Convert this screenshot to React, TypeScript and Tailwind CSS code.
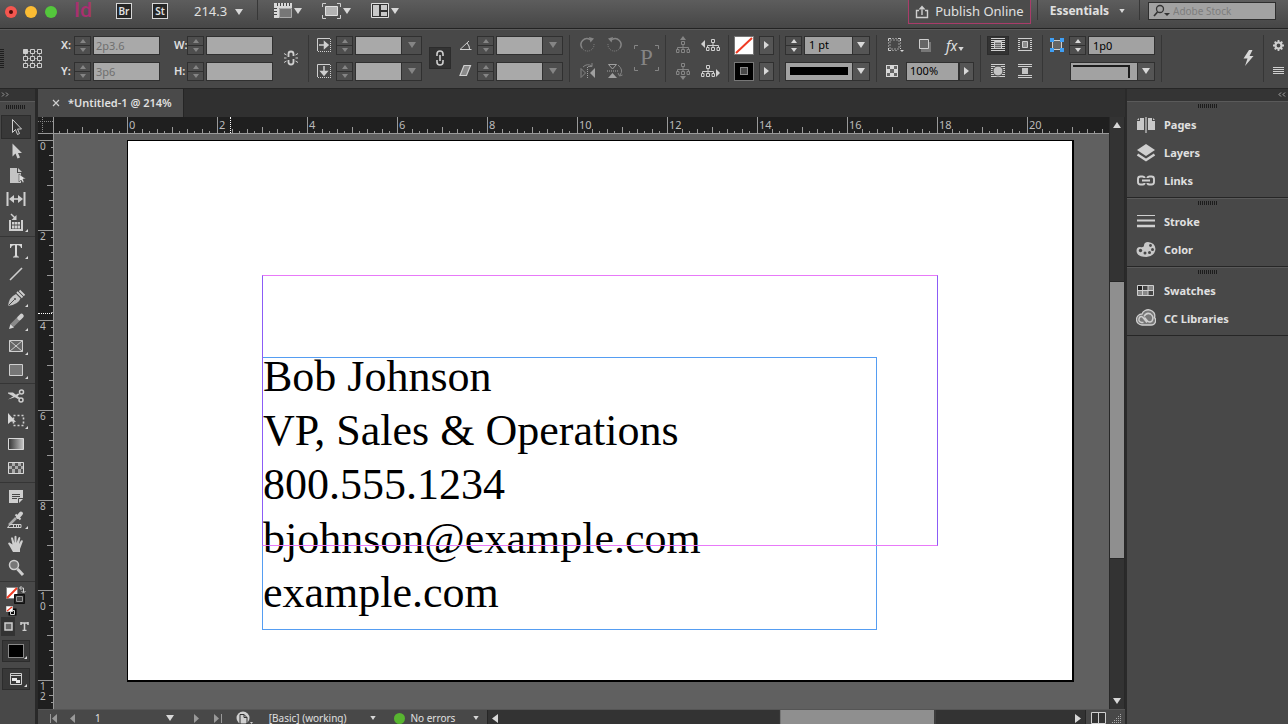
import { useState, type ReactNode } from "react";
import clsx from "clsx";

const Icon = ({ w = 20, h = 20, children }: { w?: number; h?: number; children: ReactNode }) => (
	<svg
		width={w}
		height={h}
		viewBox={`0 0 ${w} ${h}`}
		fill="none"
		stroke="#cfcfcf"
		className="block shrink-0"
		aria-hidden="true"
	>
		{children}
	</svg>
);

const Caret = ({ dim = false, small = false }: { dim?: boolean; small?: boolean }) => (
	<svg
		width={small ? 6 : 8}
		height={small ? 4 : 6}
		viewBox="0 0 8 6"
		fill={dim ? "#858585" : "#d8d8d8"}
		className="block shrink-0"
		aria-hidden="true"
	>
		<path d="M0 0h8L4 6z" />
	</svg>
);

const Separator = () => <div className="h-[47px] w-px shrink-0 bg-[#363636]" />;

const Stepper = ({ name, dim = false }: { name: string; dim?: boolean }) => (
	<div className="flex h-[19px] w-[17px] shrink-0 flex-col border border-[#303030]">
		<button
			type="button"
			aria-label={`Increase ${name}`}
			className="flex flex-1 items-center justify-center border-b border-[#303030] bg-[#4e4e4e]"
		>
			<svg width="6" height="4" viewBox="0 0 6 4" fill={dim ? "#858585" : "#d8d8d8"}>
				<path d="M0 4h6L3 0z" />
			</svg>
		</button>
		<button
			type="button"
			aria-label={`Decrease ${name}`}
			className="flex flex-1 items-center justify-center bg-[#4e4e4e]"
		>
			<svg width="6" height="4" viewBox="0 0 6 4" fill={dim ? "#858585" : "#d8d8d8"}>
				<path d="M0 0h6L3 4z" />
			</svg>
		</button>
	</div>
);

const LabelledField = ({ id, value }: { id: string; value: string }) => (
	<div className="flex h-[19px] items-center">
		<label htmlFor={id} className="w-[13px] shrink-0 text-[11px] font-semibold">
			{id}:
		</label>
		<Stepper name={id} dim />
		<input
			id={id}
			defaultValue={value}
			className="ml-0.5 h-[19px] w-[67px] border border-[#303030] bg-[#a9a9a9] px-0.5 text-[11px] text-[#6f6f6f]"
		/>
	</div>
);

const EmptyCombo = ({ name }: { name: string }) => (
	<div className="flex items-center gap-0.5">
		<Stepper name={name} dim />
		<div className="flex h-[19px] w-[67px] border border-[#303030]">
			<input aria-label={name} className="w-[46px] border-r border-[#303030] bg-[#a9a9a9]" />
			<button
				type="button"
				aria-label={`${name} presets`}
				className="flex flex-1 items-center justify-center bg-[#4e4e4e]"
			>
				<Caret dim />
			</button>
		</div>
	</div>
);

const ArrowButton = ({ name }: { name: string }) => (
	<button
		type="button"
		aria-label={name}
		className="flex h-[19px] w-[15px] shrink-0 items-center justify-center border border-[#303030] bg-[#555]"
	>
		<svg width="5" height="8" viewBox="0 0 5 8" fill="#d8d8d8">
			<path d="M0 0v8l5-4z" />
		</svg>
	</button>
);

const DropButton = ({ name }: { name: string }) => (
	<button
		type="button"
		aria-label={name}
		className="flex w-[17px] shrink-0 items-center justify-center border-l border-[#303030] bg-[#555]"
	>
		<Caret />
	</button>
);

const Rows = ({ children, className }: { children: ReactNode; className?: string }) => (
	<div className={clsx("flex shrink-0 flex-col gap-[7px]", className)}>{children}</div>
);

const IconButton = ({ name, children, className }: { name: string; children: ReactNode; className?: string }) => (
	<button
		type="button"
		aria-label={name}
		className={clsx("flex h-[19px] shrink-0 items-center justify-center", className)}
	>
		{children}
	</button>
);

const Tree = ({ dim = false, arrow }: { dim?: boolean; arrow: "up" | "down" | "left" | "right" }) => {
	const color = dim ? "#858585" : "#cfcfcf";
	const arrows = {
		up: "M6 4h6L9 0z",
		down: "M6 14h6l-3 4z",
		left: "M4 4v8L0 8z",
		right: "M15 7v8l4-4z",
	};
	const shift = { up: 5, down: 1, left: 3, right: 3 }[arrow];
	const side = arrow === "left" ? 3 : arrow === "right" ? -2 : 0;
	return (
		<Icon w={19} h={18}>
			<g transform={`translate(${side} ${shift})`} stroke={color}>
				<path d="M7.500 .5h3v3h-3zM2.500 8.500h2.500v3H2.500zM7.500 8.500h3v3h-3zM13 8.500h2.500v3H13zM9 4v4M3.500 8V6.500h11V8" />
			</g>
			<path d={arrows[arrow]} fill={color} stroke="none" />
		</Icon>
	);
};

const Wrap = ({ kind }: { kind: "none" | "box" | "shape" | "jump" }) => (
	<Icon w={14} h={14}>
		<path
			d={kind === "jump" ? "M0 .5h14M0 2.500h14M0 11.500h14M0 13.500h14" : "M0 .5h14M0 2.500h14M0 4.500h14M0 6.500h14M0 8.500h14M0 10.500h14M0 12.500h14"}
		/>
		{kind === "none" && <path d="M3.500 3.500h7v7h-7z" fill="#8a8a8a" fillOpacity=".6" stroke="#cfcfcf" />}
		{kind === "box" && (
			<>
				<path d="M2 2h10v10H2z" fill="#484848" stroke="none" />
				<path d="M4.500 3.500h5v6h-5z" fill="#8a8a8a" />
			</>
		)}
		{kind === "shape" && (
			<circle cx="7" cy="7" r="5" fill="#c4c4c4" stroke="#484848" />
		)}
		{kind === "jump" && <path d="M4 4h6v6H4z" fill="#c4c4c4" stroke="none" />}
	</Icon>
);

const TitleBar = () => (
	<header className="flex h-[29px] shrink-0 items-start overflow-hidden border-b border-[#232323] bg-linear-to-b from-[#5d5d5d] to-[#464646]">
		<div className="flex gap-2 pt-1.5 pl-[5px]">
			<button type="button" aria-label="Close window" className="flex size-3 items-center justify-center rounded-full bg-[#f4564f]">
				<span className="size-1 rounded-full bg-[#4d0b08]" />
			</button>
			<button type="button" aria-label="Minimize window" className="size-3 rounded-full bg-[#fbbc33]" />
			<button type="button" aria-label="Zoom window" className="size-3 rounded-full bg-[#54c73c]" />
		</div>
		<span className="ml-[17px] w-[42px] font-['Roboto',sans-serif] text-[21px] leading-5 font-medium text-[#a9306f]">Id</span>
		<button type="button" className="mt-[3px] size-4 border border-[#d8d8d8] bg-[#262626] text-[10px] leading-[14px] font-semibold">
			Br
		</button>
		<button type="button" className="mt-[3px] ml-5 size-4 border border-[#d8d8d8] bg-[#262626] text-[10px] leading-[14px] font-semibold">
			St
		</button>
		<button type="button" className="ml-[26px] flex h-6 items-center gap-2 text-[13px]">
			214.3 <Caret />
		</button>
		<div className="ml-3.5 h-5 w-px bg-[#373737]" />
		<button type="button" aria-label="View options" className="mt-[3px] ml-4 flex items-center gap-0.5">
			<Icon w={18} h={16}>
				<path d="M0 0h18v5H5v10H0z" fill="#d8d8d8" stroke="none" />
				<path d="M5.500 5.500h12v9h-12z" fill="#777" stroke="#aaa" />
				<path d="M3.500 0v3M6.500 0v3M9.500 0v3M12.500 0v3M15.500 0v3M0 5.500h3M0 8.500h3M0 11.500h3" stroke="#444" />
			</Icon>
			<Caret />
		</button>
		<button type="button" aria-label="Screen mode" className="mt-[3px] ml-5 flex items-center gap-0.5">
			<Icon w={19} h={16}>
				<path d="M.5 4V.5H4M15 .5h3.500V4M18.500 12v3.500H15M4 15.500H.5V12" />
				<path d="M3.500 3.500h12v9h-12z" fill="#b4b4b4" stroke="#e0e0e0" />
			</Icon>
			<Caret />
		</button>
		<button type="button" aria-label="Arrange documents" className="mt-[3px] ml-5 flex items-center gap-0.5">
			<Icon w={18} h={16}>
				<path d="M.5 .5h17v14H.5z" fill="#333" stroke="#e0e0e0" />
				<path d="M2 2h6v11H2zM10 2h6v5h-6zM10 9h6v4h-6z" fill="#c8c8c8" stroke="none" />
			</Icon>
			<Caret />
		</button>
		<button
			type="button"
			className="ml-auto flex h-6 items-center gap-1.5 border border-t-0 border-[#a93c6a] bg-[#4b4b4b] px-1.5 text-[13px] whitespace-nowrap"
		>
			<Icon w={14} h={14}>
				<path d="M4 5.500H1.500v7h11v-7H10M7 10V2M4.500 4.500 7 1.500l2.500 3" strokeWidth="1.400" />
			</Icon>
			Publish Online
		</button>
		<div className="ml-1.5 h-5 w-px bg-[#373737]" />
		<button type="button" className="ml-3 flex h-[22px] items-center gap-2.5 text-[12px] font-bold">
			Essentials <Caret small />
		</button>
		<div className="mr-2 ml-3.5 h-5 w-px bg-[#373737]" />
		<div className="mt-0.5 mr-3 flex h-[18px] w-[128px] items-center border border-[#2e2e2e] bg-[#a2a2a2] pl-1">
			<Icon w={18} h={14}>
				<circle cx="7" cy="5" r="3.500" stroke="#333" strokeWidth="1.300" />
				<path d="M4.500 8 1 12" stroke="#333" strokeWidth="1.600" />
				<path d="M11 9h6l-3 3z" fill="#333" stroke="none" />
			</Icon>
			<input
				type="search"
				aria-label="Search Adobe Stock"
				placeholder="Adobe Stock"
				className="ml-0.5 w-[96px] text-[10px] placeholder:text-[#7d7d7d]"
			/>
		</div>
	</header>
);

const ControlBar = () => (
	<section
		aria-label="Control"
		className="flex h-[60px] shrink-0 items-center border-t border-b border-t-[#5a5a5a] border-b-[#262626] bg-[#484848] pb-0.5"
	>
		<svg width="4" height="19" className="block shrink-0" stroke="#1e1e1e">
			<path d="M0 .5h4M0 2.500h4M0 4.500h4M0 6.500h4M0 8.500h4M0 10.500h4M0 12.500h4M0 14.500h4M0 16.500h4M0 18.500h4" />
		</svg>
		<button type="button" aria-label="Reference point" className="ml-[19px]">
			<Icon w={19} h={19}>
				<path d="M5 2.500h2M12 2.500h2M5 16.500h2M12 16.500h2M2.500 5v2M2.500 12v2M16.500 5v2M16.500 12v2M9.500 5v2M9.500 12v2M5 9.500h2M12 9.500h2" stroke="#999" />
				<path d="M.5 .5h4v4h-4z" fill="#cfcfcf" />
				<path d="M7.500 .5h4v4h-4zM14.500 .5h4v4h-4zM.5 7.500h4v4h-4zM7.500 7.500h4v4h-4zM14.500 7.500h4v4h-4zM.5 14.500h4v4h-4zM7.500 14.500h4v4h-4zM14.500 14.500h4v4h-4z" />
			</Icon>
		</button>
		<Rows className="ml-[19px]">
			<LabelledField id="X" value="2p3.6" />
			<LabelledField id="Y" value="3p6" />
		</Rows>
		<Rows className="ml-3.5">
			<LabelledField id="W" value="" />
			<LabelledField id="H" value="" />
		</Rows>
		<button type="button" aria-label="Constrain width and height" className="mr-2.5 ml-[11px]">
			<Icon w={14} h={16}>
				<path d="M4.500 6V4a2.500 2.500 0 0 1 5 0v2M4.500 10v2a2.500 2.500 0 0 0 5 0v-2M4.500 6v1M9.500 9v1" strokeWidth="1.800" />
				<path d="M0 8h2.500M11.500 8H14M0 3.500l2.500 1.500M14 3.500 11.500 5M0 12.500 2.500 11M14 12.500 11.500 11" />
			</Icon>
		</button>
		<Separator />
		<Rows className="ml-2">
			<div className="flex items-center gap-[5px]">
				<Icon w={14} h={14}>
					<path d="M.5 13V.5H13" strokeWidth="1" />
					<path d="M13.500 1v13M1 13.500h12" strokeDasharray="1 1" />
					<path d="M2 7h8M7.500 4 11 7l-3.500 3z" fill="#d8d8d8" strokeWidth="1.500" />
				</Icon>
				<EmptyCombo name="Scale X" />
			</div>
			<div className="flex items-center gap-[5px]">
				<Icon w={14} h={14}>
					<path d="M.5 13V.5H13" />
					<path d="M13.500 1v13M1 13.500h12" strokeDasharray="1 1" />
					<path d="M7 2v8M4 7.500 7 11l3-3.500z" fill="#d8d8d8" strokeWidth="1.500" />
				</Icon>
				<EmptyCombo name="Scale Y" />
			</div>
		</Rows>
		<button
			type="button"
			aria-label="Constrain scale"
			className="mx-[7px] flex h-[22px] w-[22px] shrink-0 items-center justify-center border border-[#2c2c2c] bg-[#333]"
		>
			<Icon w={8} h={16}>
				<path d="M1 6V4a3 3 0 0 1 6 0v2M1 10v2a3 3 0 0 0 6 0v-2M4 5v6" strokeWidth="1.600" />
			</Icon>
		</button>
		<Rows className="ml-px">
			<div className="flex items-center gap-[5px]">
				<Icon w={13} h={14}>
					<path d="M1 11.500h11.500M1 11.500 10 3M8 5q3 3 2.500 6.500" fill="#8a8a8a" />
				</Icon>
				<EmptyCombo name="Rotation" />
			</div>
			<div className="flex items-center gap-[5px]">
				<Icon w={13} h={14}>
					<path d="M5 1.500h6.500l-4 10H1z" fill="#8a8a8a" strokeWidth="1.200" />
				</Icon>
				<EmptyCombo name="Shear" />
			</div>
		</Rows>
		<div className="ml-1.5">
			<Separator />
		</div>
		<Rows className="ml-2">
			<div className="flex gap-2">
				<IconButton name="Rotate 90° clockwise">
					<Icon w={19} h={18}>
						<path d="M4 12A6 6 0 0 1 12 3.500" stroke="#858585" strokeWidth="1.500" />
						<path d="M11 1l5 1.500-3.500 4z" fill="#858585" stroke="none" />
						<path d="M16 8a6.500 6.500 0 0 1-12 4" stroke="#858585" strokeDasharray="1 1" />
					</Icon>
				</IconButton>
				<IconButton name="Rotate 90° counter-clockwise">
					<Icon w={19} h={18}>
						<path d="M15 12A6 6 0 0 0 7 3.500" stroke="#858585" strokeWidth="1.500" />
						<path d="M8 1 3 2.500l3.500 4z" fill="#858585" stroke="none" />
						<path d="M3 8a6.500 6.500 0 0 0 12 4" stroke="#858585" strokeDasharray="1 1" />
					</Icon>
				</IconButton>
			</div>
			<div className="flex gap-2">
				<IconButton name="Flip horizontal">
					<Icon w={19} h={18}>
						<path d="M3 6.500v9L7.500 11z" stroke="#858585" />
						<path d="M17 6v10l-5-5z" fill="#a0a0a0" stroke="none" />
						<path d="M9.500 5v12" stroke="#a0a0a0" strokeDasharray="1 1" />
						<path d="M5 5q4-4 9-1M14 1v3.500h-4" stroke="#858585" />
					</Icon>
				</IconButton>
				<IconButton name="Flip vertical">
					<Icon w={19} h={18}>
						<path d="M3.500 2.500h8L7.500 7z" stroke="#a0a0a0" />
						<path d="M3 16h9l-4.500-5z" fill="#a0a0a0" stroke="none" />
						<path d="M2 9h11" stroke="#a0a0a0" strokeDasharray="1 1" />
						<path d="M13 3q6 5 2 10M13 11l1.500 3 3-1" stroke="#858585" />
					</Icon>
				</IconButton>
			</div>
		</Rows>
		<div className="relative ml-2.5 flex h-[26px] w-[25px] shrink-0 items-center justify-center font-['Liberation_Serif',serif] text-[23px] text-[#858585]">
			<svg width="25" height="26" className="absolute inset-0" fill="none" stroke="#858585">
				<path d="M.5 4V.5H4M21 .5h3.500V4M24.500 22v3.500H21M4 25.500H.5V22" />
			</svg>
			P
		</div>
		<div className="mr-2 ml-1.5">
			<Separator />
		</div>
		<Rows>
			<div className="flex gap-2">
				<IconButton name="Select container"><Tree dim arrow="up" /></IconButton>
				<IconButton name="Select previous object"><Tree arrow="left" /></IconButton>
			</div>
			<div className="flex gap-2">
				<IconButton name="Select content"><Tree dim arrow="down" /></IconButton>
				<IconButton name="Select next object"><Tree arrow="right" /></IconButton>
			</div>
		</Rows>
		<div className="mr-[5px] ml-2">
			<Separator />
		</div>
		<Rows>
			<div className="flex gap-[5px]">
				<IconButton name="Fill" className="w-5 border border-[#777] bg-white">
					<Icon w={18} h={17}>
						<path d="M1 16 17 1" stroke="#ef3b24" strokeWidth="2" />
					</Icon>
				</IconButton>
				<ArrowButton name="Fill options" />
			</div>
			<div className="flex gap-[5px]">
				<IconButton name="Stroke" className="w-5 border border-[#777] bg-black">
					<span className="size-2 border border-[#8a8a8a] bg-[#484848]" />
				</IconButton>
				<ArrowButton name="Stroke options" />
			</div>
		</Rows>
		<div className="mr-[5px] ml-[5px]">
			<Separator />
		</div>
		<Rows className="w-[85px]">
			<div className="flex gap-0.5">
				<Stepper name="stroke weight" />
				<div className="flex h-[19px] w-[66px] border border-[#303030]">
					<input aria-label="Stroke weight" defaultValue="1 pt" className="min-w-0 flex-1 bg-[#a2a2a2] px-1 text-[11px] text-black" />
					<DropButton name="Stroke weight presets" />
				</div>
			</div>
			<div className="flex h-[19px] border border-[#303030] bg-[#a2a2a2]">
				<div className="flex flex-1 items-center px-1">
					<div className="h-2 flex-1 bg-black" />
				</div>
				<DropButton name="Stroke type" />
			</div>
		</Rows>
		<div className="mr-1.5 ml-1.5">
			<Separator />
		</div>
		<Rows>
			<div className="flex gap-3 pl-1">
				<IconButton name="Corner options">
					<Icon w={17} h={16}>
						<path d="M3 3h9v9H3z" stroke="#9a9a9a" strokeDasharray="2 1" />
						<path d="M1.500 4V1.500H4M5.500 1.500h1M8.500 1.500h1M11 1.500h2.500V4M1.500 5.500v1M1.500 8.500v1M13.500 5.500v1M13.500 8.500v1M5.500 13.500h1M8.500 13.500h1M4 13.500H1.500V11M13.500 11v1" />
						<path d="M13 13h4l-2 2z" fill="#d8d8d8" stroke="none" />
					</Icon>
				</IconButton>
				<IconButton name="Drop shadow">
					<Icon w={18} h={16}>
						<path d="M5 5h10v10H5z" fill="#777" stroke="none" />
						<path d="M3.500 2.500h9v9h-9z" fill="#666" />
					</Icon>
				</IconButton>
				<IconButton name="Effects" className="gap-px text-[14px] italic">
					fx
					<span className="pt-2"><Caret small /></span>
				</IconButton>
			</div>
			<div className="flex items-center gap-2 pl-[3px]">
				<Icon w={12} h={12}>
					<path d="M0 0h12v12H0z" fill="#d8d8d8" stroke="none" />
					<path d="M1 1h3v3H1zM8 1h3v3H8zM4 4h4v4H4zM1 8h3v3H1zM8 8h3v3H8z" fill="#666" stroke="none" />
				</Icon>
				<div className="flex h-[19px]">
					<input aria-label="Opacity" defaultValue="100%" className="w-[53px] border border-[#303030] bg-[#a2a2a2] px-[3px] text-[11px] text-black" />
					<ArrowButton name="Opacity slider" />
				</div>
			</div>
		</Rows>
		<div className="mr-1.5 ml-1.5">
			<Separator />
		</div>
		<Rows>
			<div className="flex gap-[5px]">
				<IconButton name="No text wrap" className="w-[22px] border border-[#2c2c2c] bg-[#333]"><Wrap kind="none" /></IconButton>
				<IconButton name="Wrap around bounding box" className="w-[22px]"><Wrap kind="box" /></IconButton>
			</div>
			<div className="flex gap-[5px]">
				<IconButton name="Wrap around object shape" className="w-[22px]"><Wrap kind="shape" /></IconButton>
				<IconButton name="Jump object" className="w-[22px]"><Wrap kind="jump" /></IconButton>
			</div>
		</Rows>
		<div className="mr-[7px] ml-1.5">
			<Separator />
		</div>
		<Rows>
			<div className="flex items-center">
				<Icon w={14} h={14}>
					<path d="M2.500 2.500h9v9h-9z" fill="#666" />
					<path d="M0 0h4v4H0zM10 0h4v4h-4zM0 10h4v4H0zM10 10h4v4h-4z" fill="#3f9ff5" stroke="none" />
				</Icon>
				<div className="ml-[5px] flex gap-0.5">
					<Stepper name="corner size" />
					<input aria-label="Corner size" defaultValue="1p0" className="h-[19px] w-[67px] border border-[#303030] bg-[#a2a2a2] px-1 text-[11px] text-black" />
				</div>
			</div>
			<div className="ml-5 flex h-[19px] border border-[#303030] bg-[#a2a2a2]">
				<svg viewBox="0 0 66 17" className="h-[17px] min-w-0 flex-1" fill="none" stroke="#1c1c1c" strokeWidth="2">
					<path d="M2 3h56v12" />
				</svg>
				<DropButton name="Corner shape" />
			</div>
		</Rows>
		<div className="ml-1.5">
			<Separator />
		</div>
		<button type="button" aria-label="Quick apply" className="mr-2 ml-auto">
			<Icon w={14} h={18}>
				<path d="M8 1 2.500 9.500H6.500L4 17l8.500-10H8.500L11.500 1z" fill="#d8d8d8" stroke="none" />
			</Icon>
		</button>
		<Separator />
		<Rows className="mr-[3px] ml-2">
			<IconButton name="Customize control panel" className="w-[13px]">
				<Icon w={11} h={11}>
					<circle cx="5.500" cy="5.500" r="3" strokeWidth="2.200" />
					<path d="M5.500 0v2M5.500 9v2M0 5.500h2M9 5.500h2M1.700 1.700 3 3M8 8l1.300 1.300M9.300 1.700 8 3M3 8 1.700 9.300" strokeWidth="1.800" />
				</Icon>
			</IconButton>
			<IconButton name="Panel menu" className="w-[13px]">
				<Icon w={11} h={8}>
					<path d="M0 .5h11M0 2.500h11M0 4.500h11M0 6.500h11" />
				</Icon>
			</IconButton>
		</Rows>
	</section>
);

type Tool = { name: string; art: ReactNode; flyout?: boolean };

const toolGroups: Tool[][] = [
	[
		{
			name: "Selection",
			art: <path d="M6.500 2.500v13l3-3 2 5 2-1-2-4.500h4z" fill="#333" />,
		},
		{
			name: "Direct Selection",
			art: <path d="M6.500 2.500v13l3-3 2 5 2.500-1-2-4.500h4z" fill="#cfcfcf" stroke="none" />,
		},
		{
			name: "Page",
			art: (
				<>
					<path d="M4 3h7v5h4v10H4zM12 3l4 4h-4z" fill="#c4c4c4" stroke="none" />
					<path d="M13 9v8l2-2 2 3 1-1-1-3h3z" fill="#e0e0e0" stroke="#484848" strokeWidth=".6" />
				</>
			),
		},
		{
			name: "Gap",
			art: (
				<>
					<path d="M1.500 3v14M18.500 3v14" strokeWidth="2" />
					<path d="M5 10h10" strokeWidth="1.600" />
					<path d="M8 6v8l-5-4zM12 6v8l5-4z" fill="#cfcfcf" stroke="none" />
				</>
			),
		},
		{
			name: "Content Collector",
			flyout: true,
			art: (
				<>
					<path d="M4 7v10h12V7" strokeWidth="2" />
					<path d="M6 9h2.500v2.500H6zM9 9h2.500v2.500H9zM12 9h2v2.500h-2zM6 12.500h2.500v3H6zM9 12.500h2.500v3H9zM12 12.500h2v3h-2z" fill="#cfcfcf" stroke="none" />
					<path d="M5 1l4 4" strokeWidth="1.500" />
					<path d="M10.500 2v5h-5z" fill="#cfcfcf" stroke="none" />
				</>
			),
		},
	],
	[
		{
			name: "Type",
			flyout: true,
			art: <path d="M4 4h12v4h-1q-.5-2.800-3-2.800h-1V15q0 1.500 2 1.700v.8H7v-.8q2-.2 2-1.700V5.200H8Q5.500 5.200 5 8H4z" fill="#d8d8d8" stroke="none" />,
		},
		{ name: "Line", art: <path d="M4 16 16 4" strokeWidth="1.600" /> },
		{
			name: "Pen",
			flyout: true,
			art: (
				<>
					<path d="M2 18q1-9 8-12l4.500 4.500q-2 6-12.500 7.500z" fill="#c4c4c4" stroke="none" />
					<path d="M2.500 17.500l6-6" stroke="#484848" />
					<circle cx="9" cy="11" r="1" fill="#484848" stroke="none" />
					<path d="M11 4l5.500 5.500M13.500 2.500l5 5" strokeWidth="1.800" />
				</>
			),
		},
		{
			name: "Pencil",
			flyout: true,
			art: (
				<>
					<path d="M3 17l1.500-5 3.500 3.500z" fill="#d8d8d8" stroke="none" />
					<path d="M6 13.500 13.500 6" stroke="#8a8a8a" strokeWidth="4.500" />
					<path d="M13.500 6l2-2" strokeWidth="4.500" strokeLinecap="round" />
				</>
			),
		},
		{
			name: "Rectangle Frame",
			flyout: true,
			art: <path d="M3.500 4.500h13v11h-13zM3.500 4.500l13 11M16.500 4.500l-13 11" fill="#666" />,
		},
		{ name: "Rectangle", flyout: true, art: <path d="M3.500 4.500h13v11h-13z" fill="#777" /> },
	],
	[
		{
			name: "Scissors",
			art: (
				<>
					<circle cx="15.500" cy="6" r="2" strokeWidth="1.500" />
					<circle cx="15" cy="14" r="2" strokeWidth="1.500" />
					<path d="M2 6.500h5l7 5.500-2 1L2 7.500zM2 13.500l10-6 2 .5-3 2.500z" fill="#cfcfcf" stroke="none" />
				</>
			),
		},
		{
			name: "Free Transform",
			flyout: true,
			art: (
				<>
					<path d="M7.500 5.500h10v10h-10z" strokeWidth="1.600" strokeDasharray="2 2" />
					<path d="M2 3v11l3-2.500 5 .5z" fill="#d8d8d8" stroke="none" />
				</>
			),
		},
		{
			name: "Gradient Swatch",
			art: (
				<>
					<defs>
						<linearGradient id="swatch">
							<stop stopColor="#333" />
							<stop offset="1" stopColor="#c8c8c8" />
						</linearGradient>
					</defs>
					<path d="M2.500 4.500h15v11h-15z" fill="url(#swatch)" stroke="#d8d8d8" />
				</>
			),
		},
		{
			name: "Gradient Feather",
			art: (
				<>
					<path d="M2.500 4.500h15v11h-15z" fill="#aaa" stroke="#d8d8d8" />
					<path d="M3 5h3v3H3zM9 5h3v3H9zM15 5h2v3h-2zM6 8h3v3H6zM12 8h3v3h-3zM3 11h3v4H3zM9 11h3v4H9zM15 11h2v4h-2z" fill="#555" stroke="none" />
				</>
			),
		},
	],
	[
		{
			name: "Note",
			art: (
				<>
					<path d="M3 4h14v9l-4 4H3z" fill="#cfcfcf" stroke="none" />
					<path d="M6 8.500h8M6 10.500h8M6 12.500h5M12.500 17v-4.500H17" stroke="#484848" />
				</>
			),
		},
		{
			name: "Eyedropper",
			flyout: true,
			art: (
				<>
					<path d="M3 15 10 8" stroke="#aaa" strokeWidth="2.500" />
					<path d="M9.500 4.500l5 5" strokeWidth="2" />
					<path d="M12 7l3-3.500" strokeWidth="4" strokeLinecap="round" />
					<path d="M1.500 17.500 4 14.500h11v3zM7.500 15v2M10.500 15v2M12.500 15v2" />
				</>
			),
		},
		{
			name: "Hand",
			art: (
				<path d="M7 18 3 11q-2-2 .5-2.500l3 2L5 4q1-1.500 2 0l1.500 5V2.500q1-1.500 2 0V9l2-5.500q1.500-1 1.800.5L13 10l2-3.500q2-.8 1.800 1L14 15v3z" fill="#cfcfcf" stroke="none" />
			),
		},
		{
			name: "Zoom",
			art: (
				<>
					<circle cx="8" cy="7" r="4.500" fill="#777" strokeWidth="1.500" />
					<path d="M11.500 11l5.500 6" strokeWidth="3" />
				</>
			),
		},
	],
];

const groupSpacing = ["pb-px", "border-t py-px", "border-t pb-0.5", "border-t py-px"];

const Grip = () => (
	<svg width="20" height="4" className="block" stroke="#1c1c1c" aria-hidden="true">
		<path d="M0 2h20" strokeWidth="4" strokeDasharray="1 1" />
	</svg>
);

const Flyout = () => (
	<span className="absolute right-0.5 bottom-0.5">
		<svg width="3" height="3" fill="#d8d8d8" className="block"><path d="M3 0v3H0z" /></svg>
	</span>
);

const ToolBar = () => {
	const [active, setActive] = useState<string>("Selection");
	return (
		<nav aria-label="Tools" className="flex w-[38px] shrink-0 flex-col border-r-[3px] border-[#292929] bg-[#484848]">
			<div className="h-3 shrink-0 bg-[#343434] pl-px">
				<Icon w={9} h={9}>
					<path d="M1 3.500 3 5.500 1 7.500M5 3.500 7 5.500 5 7.500" stroke="#999" />
				</Icon>
			</div>
			<div className="flex h-3.5 shrink-0 justify-start border-t border-[#5a5a5a] pt-[3px] pl-1.5"><Grip /></div>
			{toolGroups.map((group, i) => (
				<div key={i} className={clsx("flex shrink-0 flex-col border-[#353535]", groupSpacing[i])}>
					{group.map(({ name, art, flyout }) => (
						<button
							key={name}
							type="button"
							aria-label={`${name} tool`}
							onClick={() => setActive(name)}
							className={clsx(
								"relative mx-px flex h-6 w-[30px] shrink-0 items-center justify-center border",
								active === name ? "border-[#2c2c2c] bg-[#383838]" : "border-transparent",
							)}
						>
							<Icon>{art}</Icon>
							{flyout && <Flyout />}
						</button>
					))}
				</div>
			))}
			<div className="border-t border-[#353535] px-1 pt-1">
				<Icon w={24} h={30}>
					<path d="M2.500 1.500h11v11h-11z" fill="#fff" stroke="#888" />
					<path d="M3 12 13 2" stroke="#ef3b24" strokeWidth="2" />
					<path d="M10.500 8.500h10v9h-10z" fill="#222" stroke="#111" />
					<path d="M12.500 10.500h6v5h-6z" fill="#484848" stroke="#999" />
					<path d="M16 2h3.500v4M17.500 0l-2 2 2 2M17.500 5l2 2 2-2" />
					<path d="M5.500 23.500h6v5h-6z" fill="#111" stroke="#000" strokeWidth="2" />
					<path d="M6.500 24.500h4v4h-4z" stroke="#d8d8d8" />
					<path d="M2.500 20.500h6v5h-6z" fill="#fff" />
					<path d="M3 25l5-4" stroke="#ef3b24" strokeWidth="1.500" />
				</Icon>
			</div>
			<div className="flex px-px pt-px">
				<IconButton name="Formatting affects container" className="w-3.5 bg-[#333]">
					<Icon w={9} h={9}><path d="M1 1h7v7H1z" fill="#666" strokeWidth="1.500" /></Icon>
				</IconButton>
				<IconButton name="Formatting affects text" className="w-[18px]">
					<Icon w={9} h={9}><path d="M.5 1h8M1 0v3M8 0v3M4.500 1v8M2.500 8.500h4" strokeWidth="1.500" /></Icon>
				</IconButton>
			</div>
			<div className="mt-1 flex flex-col gap-1.5 px-0.5">
				<button type="button" aria-label="Apply color" className="relative flex h-[22px] w-7 items-center justify-center border border-[#2c2c2c] bg-[#383838]">
					<span className="h-[14px] w-4 border border-[#888] bg-black" />
					<Flyout />
				</button>
				<button type="button" aria-label="Screen mode" className="relative flex h-[22px] w-7 items-center justify-center border border-[#2c2c2c] bg-[#383838]">
					<Icon w={12} h={12}>
						<path d="M.5 .5h11v11H.5zM0 2.500h12" />
						<path d="M2 5h5v3H2zM6 7h4v3H6z" fill="#e8e8e8" stroke="none" />
					</Icon>
					<Flyout />
				</button>
			</div>
		</nav>
	);
};

// One major ruler interval is 2 picas wide, split in twelve
const ticks = Array.from({ length: 11 }, (_, i) => i + 1);
const tickLength = (n: number) => (n === 6 ? 6 : n % 2 === 0 ? 4 : 2);

const HorizontalRuler = () => (
	<div className="relative flex h-[17px] flex-1 overflow-hidden border-b border-[#999] bg-[#1f1f1f]">
		{[-2, 0, 2, 4, 6, 8, 10, 12, 14, 16, 18, 20].map((n) => (
			<div
				key={n}
				className={clsx("relative flex h-4 shrink-0", n < 0 ? "w-[73px] justify-end" : "w-[90px] border-l border-[#999]")}
			>
				<svg
					width="90"
					height="16"
					className={clsx("absolute top-0", n < 0 ? "right-0" : "-left-px")}
					stroke="#999"
					aria-hidden="true"
				>
					{ticks.map((t) => (
						<path key={t} d={`M${Math.floor(t * 7.5) + 0.5} 16v-${tickLength(t)}`} />
					))}
				</svg>
				{n >= 0 && <span className="pl-px text-[11px] leading-[15px] text-[#bbb]">{n}</span>}
			</div>
		))}
		<div className="absolute top-0 left-[176px] h-4 border-l border-dotted border-white" />
	</div>
);

const VerticalRuler = () => (
	<div className="relative flex w-4 shrink-0 flex-col overflow-hidden border-r border-[#999] bg-[#1f1f1f]">
		<div className="h-1.5 shrink-0" />
		{[0, 2, 4, 6, 8, 10, 12].map((n) => (
			<div key={n} className="relative h-[90px] shrink-0 border-t border-[#999] pl-0.5">
				<svg width="15" height="90" className="absolute -top-px left-0" stroke="#999" aria-hidden="true">
					{ticks.map((t) => (
						<path key={t} d={`M15 ${Math.floor(t * 7.5) + 0.5}h-${tickLength(t)}`} />
					))}
				</svg>
				{String(n).split("").map((digit, i) => (
					<span key={i} className="block text-[10px] leading-[10px] text-[#bbb]">
						{digit}
					</span>
				))}
			</div>
		))}
		<div className="absolute top-[179px] left-0 w-4 border-t border-dotted border-white" />
	</div>
);

const cardLines = [
	"Bob Johnson",
	"VP, Sales & Operations",
	"800.555.1234",
	"bjohnson@example.com",
	"example.com",
];

const Canvas = () => (
	<div className="relative min-w-0 flex-1 overflow-hidden bg-[#606060]">
		<div className="absolute top-1.5 left-[73px] h-[542px] w-[947px] border border-r-2 border-b-2 border-black bg-white">
			<div className="absolute top-[216px] left-[134px] h-[273px] w-[615px] border border-[#559df2] font-['Liberation_Serif',serif] text-[44px] leading-[54px] whitespace-nowrap text-black">
				<div className="-mt-2">
					{cardLines.map((line) => (
						<p key={line}>{line}</p>
					))}
				</div>
			</div>
			<div className="pointer-events-none absolute top-[134px] left-[134px] h-[271px] w-[676px] border border-x-[#8b5cf6] border-y-[#e879f9]" />
		</div>
	</div>
);

const StatusBar = () => (
	<footer className="flex h-[15px] shrink-0 items-start overflow-hidden border-t border-[#555] bg-[#484848] text-[10px] leading-4">
		<button type="button" aria-label="First page" className="mt-1 ml-3">
			<Icon w={8} h={9}><path d="M.5 0v9" stroke="#999" /><path d="M7 0v9L2 4.500z" fill="#999" stroke="none" /></Icon>
		</button>
		<button type="button" aria-label="Previous page" className="mt-1 ml-3">
			<Icon w={6} h={9}><path d="M5 0v9L0 4.500z" fill="#999" stroke="none" /></Icon>
		</button>
		<button type="button" className="ml-[19px] flex items-center gap-[65px]">
			1 <Caret />
		</button>
		<button type="button" aria-label="Next page" className="mt-1 ml-5">
			<Icon w={6} h={9}><path d="M0 0v9l5-4.500z" fill="#999" stroke="none" /></Icon>
		</button>
		<button type="button" aria-label="Last page" className="mt-1 ml-3.5">
			<Icon w={8} h={9}><path d="M7.500 0v9" stroke="#999" /><path d="M0 0v9l5-4.500z" fill="#999" stroke="none" /></Icon>
		</button>
		<button type="button" aria-label="Open document status" className="mt-px ml-3.5">
			<Icon w={17} h={14}>
				<circle cx="7" cy="7" r="6.500" fill="#cfcfcf" stroke="none" />
				<path d="M4 3.500h4l3 3V13H4zM8 3.500v3h3" stroke="#333" />
				<path d="M14 11h3l-1.500 2z" fill="#cfcfcf" stroke="none" />
			</Icon>
		</button>
		<button type="button" className="ml-4 flex items-center gap-6 whitespace-nowrap">
			[Basic] (working) <Caret small />
		</button>
		<button type="button" className="ml-[18px] flex items-center whitespace-nowrap">
			<span className="mr-[5px] size-[11px] rounded-full bg-[#58b530]" />
			No errors
			<span className="ml-[18px]"><Caret small /></span>
		</button>
		<div className="ml-2 flex h-[15px] min-w-0 flex-1 items-start border-x border-[#262626] bg-[#333]">
			<button type="button" aria-label="Scroll left" className="mt-1 ml-1">
				<Icon w={6} h={9}><path d="M6 0v9L0 4.500z" fill="#d8d8d8" stroke="none" /></Icon>
			</button>
			<div className="ml-0.5 flex flex-1">
				<div className="h-[15px] w-[27%] translate-x-[180%] border-x border-[#262626] bg-[#8f8f8f]" />
			</div>
			<button type="button" aria-label="Scroll right" className="mt-1 mr-1">
				<Icon w={6} h={9}><path d="M0 0v9l6-4.500z" fill="#d8d8d8" stroke="none" /></Icon>
			</button>
		</div>
		<button type="button" aria-label="Split layout view" className="mt-0.5 ml-[5px]">
			<Icon w={15} h={12}><path d="M.5 .5h14v11H.5zM7.500 0v12" fill="#333" /></Icon>
		</button>
		<svg width="10" height="12" className="mt-0.5 mr-[3px] ml-1.5 block shrink-0" fill="none" stroke="#aaa" strokeDasharray="1 1">
			<path d="M8 2.500h2M6 4.500h4M4 6.500h6M2 8.500h8M0 10.500h10" />
		</svg>
	</footer>
);

const Document = () => (
	<main className="flex min-w-0 flex-1 flex-col">
		<div className="flex h-7 shrink-0 bg-[#303030]">
			<div className="flex w-[146px] items-center gap-2 border-r border-[#252525] bg-[#4a4a4a] pl-3.5 text-[11px] font-semibold whitespace-nowrap">
				<button type="button" aria-label="Close document">
					<Icon w={8} h={8}><path d="M1 1l6 6M7 1 1 7" strokeWidth="1.200" /></Icon>
				</button>
				*Untitled-1 @ 214%
			</div>
		</div>
		<div className="flex min-h-0 flex-1">
			<div className="flex min-w-0 flex-1 flex-col">
				<div className="flex shrink-0">
					<svg width="16" height="17" className="block shrink-0 bg-[#1f1f1f]" stroke="#888">
						<path d="M4.500 0v16M0 4.500h16" strokeDasharray="1 1" />
						<path d="M15.500 0v17M0 16.500h16" stroke="#999" />
					</svg>
					<HorizontalRuler />
				</div>
				<div className="flex min-h-0 flex-1">
					<VerticalRuler />
					<Canvas />
				</div>
			</div>
			<div className="flex w-4 shrink-0 flex-col items-center border-x border-[#282828] bg-[#333]">
				<button type="button" aria-label="Scroll up" className="flex h-4 items-center">
					<svg width="8" height="6" fill="#d8d8d8"><path d="M0 6h8L4 0z" /></svg>
				</button>
				<div className="flex min-h-0 w-full flex-1 flex-col">
					<div className="h-[26.500%]" />
					<div className="h-[49.500%] border-y border-[#262626] bg-[#8f8f8f]" />
				</div>
				<button type="button" aria-label="Scroll down" className="flex h-4 items-center">
					<Caret />
				</button>
			</div>
		</div>
		<StatusBar />
	</main>
);

const panelGroups: { name: string; art: ReactNode }[][] = [
	[
		{
			name: "Pages",
			art: (
				<>
					<path d="M4 3h4v12H1V6h3zM12 3h4v3h3v9h-7zM3 3v2H1zM17 3v2h2z" fill="#c8c8c8" stroke="none" />
					<path d="M10 2v16" stroke="#e8e8e8" />
				</>
			),
		},
		{
			name: "Layers",
			art: (
				<>
					<path d="M10 1l9 6-9 6-9-6z" fill="#cfcfcf" stroke="none" />
					<path d="M1.500 11.500 10 17l8.500-5.500" strokeWidth="2.500" />
				</>
			),
		},
		{
			name: "Links",
			art: (
				<path d="M8.500 7V6.500Q8 5.500 6.500 5.500H4.500Q2 5.500 2 8v3q0 2.500 2.500 2.500h2q1.500 0 2-1V12M11.500 7V6.500q.5-1 2-1h2Q18 5.500 18 8v3q0 2.500-2.500 2.500h-2q-1.500 0-2-1V12M6 9.500h8" strokeWidth="1.900" />
			),
		},
	],
	[
		{
			name: "Stroke",
			art: (
				<>
					<path d="M1 3.500h18" />
					<path d="M1 8.500h18" strokeWidth="2" />
					<path d="M1 14h18" strokeWidth="2.500" />
				</>
			),
		},
		{
			name: "Color",
			art: (
				<>
					<path d="M8 5.500Q8 2 12 2q7 .5 7.500 7-.5 7-9 8Q1 17 .5 11 .5 7 4 7q4 1 4-1.500z" fill="#c8c8c8" stroke="none" />
					<g fill="#484848" stroke="none">
						<circle cx="4.500" cy="10.500" r="1.700" />
						<circle cx="9" cy="13" r="1.500" />
						<circle cx="13.500" cy="12.500" r="1.500" />
						<circle cx="16.500" cy="9.500" r="1.500" />
						<circle cx="14.500" cy="5.500" r="1.400" />
					</g>
				</>
			),
		},
	],
	[
		{
			name: "Swatches",
			art: (
				<>
					<path d="M1.500 4.500h16v10h-16z" fill="#888" />
					<path d="M2 5h4v4H2z" fill="#222" stroke="none" />
					<path d="M7 5h5v4H7zM12 10h5v4h-5z" fill="#444" stroke="none" />
					<path d="M1 9.500h17M6.500 4v11M12 4v11" />
				</>
			),
		},
		{
			name: "CC Libraries",
			art: (
				<>
					<path d="M6 5a6 5.500 0 0 1 12.500 3.500 4.500 4.500 0 0 1-3.500 7.500H6A5.500 5.500 0 0 1 6 5z" fill="#777" strokeWidth="1.300" />
					<path d="M11 13.500 7 8.500Q5 6.500 3.500 8.500q-2 4 2 5h2M8 7.500Q10.500 3 14.500 5q4 3 1.500 7-2 2-4.500 0L8.500 8.500" strokeWidth="1.500" />
				</>
			),
		},
	],
];

const PanelDock = () => (
	<aside className="flex w-[163px] shrink-0 flex-col border-l-2 border-[#2a2a2a] bg-[#484848]">
		<div className="flex h-3 justify-end bg-[#343434] pt-px pr-0.5">
			<Icon w={8} h={9}><path d="M3 2.500 1 4.500 3 6.500M7 2.500 5 4.500 7 6.500" stroke="#aaa" /></Icon>
		</div>
		{panelGroups.map((group, i) => (
			<div key={i} className="flex flex-col border-t border-b border-t-[#5a5a5a] border-b-[#262626] pb-0.5">
				<div className="flex h-[9px] justify-center pt-0.5"><Grip /></div>
				{group.map(({ name, art }) => (
					<button key={name} type="button" className="flex h-7 items-center gap-2 pl-[9px] text-[11px] font-bold">
						<Icon>{art}</Icon>
						{name}
					</button>
				))}
			</div>
		))}
	</aside>
);

const App = () => (
	<div className="flex h-screen flex-col overflow-hidden bg-[#484848] font-['Noto_Sans',sans-serif] text-[#e0e0e0]">
		<TitleBar />
		<ControlBar />
		<div className="flex min-h-0 flex-1">
			<ToolBar />
			<Document />
			<PanelDock />
		</div>
	</div>
);

export default App;
